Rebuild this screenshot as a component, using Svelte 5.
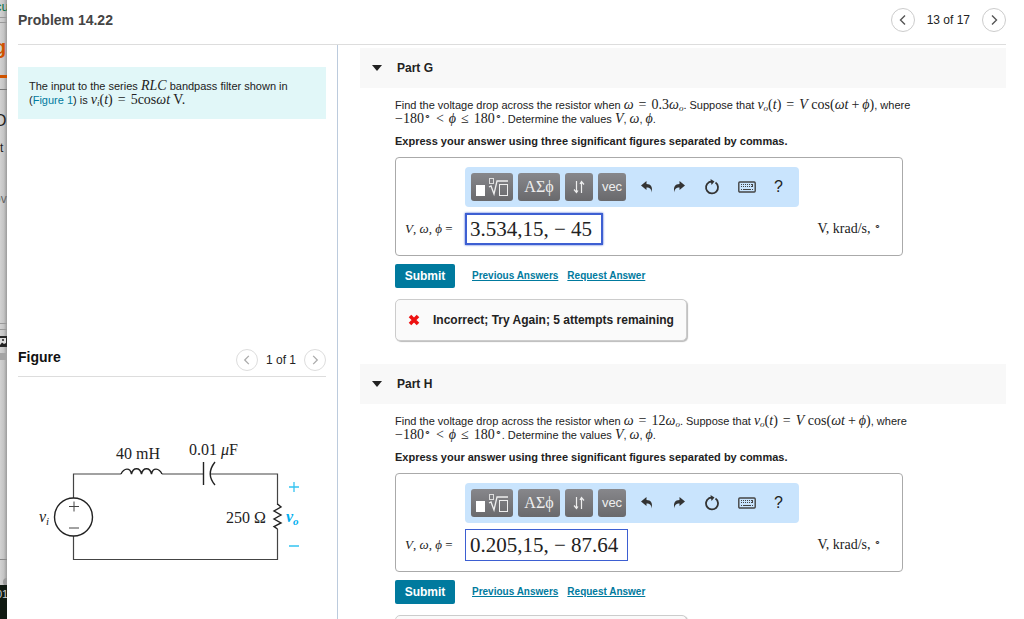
<script>
  const parts = $state([
    { id: 'G', factor: '0.3', answer: '3.534,15, − 45', width: 138, active: true },
    { id: 'H', factor: '12', answer: '0.205,15, − 87.64', width: 163, active: false }
  ]);
</script>

{#snippet arrow(dir)}
  <svg viewBox="0 0 22 22" aria-hidden="true">
    <path d={dir === 'left' ? 'M13 6.500 L8.500 11 L13 15.500' : 'M9 6.500 L13.500 11 L9 15.500'} fill="none" stroke="currentColor" stroke-width="1.400" />
  </svg>
{/snippet}

<div class="shell">
  <aside class="backdrop" aria-hidden="true">
    <svg width="7" height="1000" viewBox="0 0 7 1000">
      <defs>
        <linearGradient id="shade"><stop offset="0" stop-color="#d2d2d2" /><stop offset="0.55" stop-color="#c4c4c4" /><stop offset="1" stop-color="#9b9b9b" /></linearGradient>
      </defs>
      <rect width="7" height="585" fill="url(#shade)" />
      <text x="-5" y="11" class="g1">cu</text>
      <path d="M0 17.500H7M0 22.500H7" stroke="#999" />
      <text x="-6" y="54" class="g2">g</text>
      <rect y="75" width="7" height="3" fill="#cf5300" />
      <path d="M0 89.500H7" stroke="#777" />
      <text x="-6" y="126" class="g3">O</text>
      <text x="0" y="152" class="g4">t</text>
      <text x="-6" y="203" class="g5">ov</text>
      <path d="M0 323.500H7M0 329.500H7" stroke="#999" />
      <rect y="336" width="7" height="11" fill="#292929" />
      <rect y="338" width="6" height="8" fill="#ddd" />
      <path d="M0 345L2 342.500L4 344L6 343V346H0Z" fill="#222" />
      <circle cx="3" cy="340" r="1" fill="#222" />
      <rect y="353" width="7" height="7" fill="#a4a4a4" />
      <path d="M0 559.500H7" stroke="#888" />
      <circle cx="7" cy="582" r="4" fill="#999" />
      <rect y="585" width="7" height="415" fill="#101a12" />
      <text x="-4" y="598" class="g6">01</text>
    </svg>
  </aside>

  <div class="page">
    <header class="top">
      <h1>Problem 14.22</h1>
      <nav class="pager" aria-label="Problems">
        <button aria-label="Previous problem">{@render arrow('left')}</button>
        <span>13 of 17</span>
        <button aria-label="Next problem">{@render arrow('right')}</button>
      </nav>
    </header>

    <div class="columns">
      <section class="left">
        <div class="intro">
          The input to the series <i class="m">RLC</i> bandpass filter shown in<br />
          (<a href="#figure">Figure 1</a>) is <span class="m"><i>v<sub>i</sub></i>(<i>t</i>)<span class="rel">=</span>5cos<i>ωt</i> V.</span>
        </div>
        <div class="figure" id="figure">
          <div class="figure-head">
            <h2>Figure</h2>
            <nav class="pager small" aria-label="Figures">
              <button aria-label="Previous figure" disabled>{@render arrow('left')}</button>
              <span>1 of 1</span>
              <button aria-label="Next figure" disabled>{@render arrow('right')}</button>
            </nav>
          </div>
          <svg class="circuit" viewBox="18 377 308 200" role="img" aria-label="Series RLC bandpass filter">
            <g fill="none" stroke="#444" stroke-width="1.200">
              <path d="M73.500 498V474H121" />
              <path d="M162 474H203M210 474H277.500V505" />
              <path d="M277.500 529V559.500H73.500V536" />
              <path d="M69 506.500H79M74 501.500V511.500M69 528H79" stroke-width="1" />
            </g>
            <g fill="none" stroke="#222" stroke-width="1.400">
              <circle cx="73.500" cy="517" r="19" />
              <path d="M121 474C124 468 130 467 131.500 474C133 467 140 467 141.500 474C143 467 150 467 151.500 474C153 467 159 468 162 474" />
              <path d="M203.500 462V485M215 462Q205.500 474 215 485" />
              <path d="M277.500 504L281 507L274 511L281 515L274 519L281 523L274 526.500L277.500 529" />
            </g>
            <g class="label">
              <text x="116" y="459">40 mH</text>
              <text x="189" y="455">0.01 <tspan font-style="italic">μ</tspan>F</text>
              <text x="226" y="523">250 Ω</text>
              <text x="39" y="522" font-style="italic">v<tspan dy="3" font-size="11">i</tspan></text>
              <text x="286" y="522" class="cyan">v<tspan dy="3" font-size="11">o</tspan></text>
            </g>
            <path d="M289 487H299M294 482V492M289 546H299" stroke="#35c3f1" stroke-width="1.300" />
          </svg>
        </div>
      </section>

      <main>
        {#each parts as part (part.id)}
          <section class="part">
            <h2 class="part-head"><svg width="10" height="6" viewBox="0 0 10 6" aria-hidden="true"><path d="M0 0H10L5 6Z" fill="#222" /></svg>Part {part.id}</h2>
            <div class="body">
              <p>
                Find the voltage drop across the resistor when <span class="m"><i>ω</i><span class="rel">=</span>{part.factor}<i>ω<sub>o</sub></i></span>. Suppose that <span class="m"><i>v<sub>o</sub></i>(<i>t</i>)<span class="rel">=</span><i>V</i> cos(<i>ωt</i><span class="op">+</span><i>ϕ</i>)</span>, where<br />
                <span class="m">−180<sup>∘</sup><span class="rel">&lt;</span><i>ϕ</i><span class="rel">≤</span>180<sup>∘</sup></span>. Determine the values <i class="m">V</i>, <i class="m">ω</i>, <i class="m">ϕ</i>.
              </p>
              <p class="strong">Express your answer using three significant figures separated by commas.</p>

              <div class="answer">
                <label for="answer-{part.id}"><i>V</i>, <i>ω</i>, <i>ϕ</i> =</label>
                <div class="entry">
                  <div class="toolbar">
                    <button class="key wide" aria-label="Templates">
                      <svg width="34" height="20" viewBox="0 0 34 20" aria-hidden="true">
                        <rect x="1" y="8" width="9" height="11" fill="#fff" />
                        <path d="M14 10L16 9L19 17L22 4H33" fill="none" stroke="#eee" stroke-width="1.300" />
                        <rect x="14.500" y="1.500" width="4" height="5" fill="none" stroke="#ddd" />
                        <rect x="24.500" y="7.500" width="8" height="11" fill="none" stroke="#eee" />
                      </svg>
                    </button>
                    <button class="key wide greek">ΑΣϕ</button>
                    <button class="key" aria-label="Subscript and superscript">
                      <svg width="12" height="14" viewBox="0 0 12 14" aria-hidden="true"><path d="M3.500 1V12M1 9.500L3.500 12.500L5 10.500M8.500 13V2M7 4L8.500 1.500L11 4.500" fill="none" stroke="#eee" stroke-width="1.200" /></svg>
                    </button>
                    <button class="key">vec</button>
                    <div class="tools">
                      <button aria-label="Undo"><svg width="14" height="14" viewBox="0 0 14 14" aria-hidden="true"><path d="M1 5.500L6.500 1V4C11 4 13 7 11.500 12.500C11.500 9 10 7.500 6.500 7.500V10Z" fill="#333" /></svg></button>
                      <button aria-label="Redo"><svg width="14" height="14" viewBox="0 0 14 14" aria-hidden="true"><path d="M13 5.500L7.500 1V4C3 4 1 7 2.500 12.500C2.500 9 4 7.500 7.500 7.500V10Z" fill="#333" /></svg></button>
                      <button aria-label="Reset"><svg width="16" height="16" viewBox="0 0 16 16" aria-hidden="true"><path d="M11.500 3.500A6 6 0 1 1 5 3.200L8 2.500" fill="none" stroke="#333" stroke-width="1.800" /><path d="M6.500 0L10.500 2.500L7.500 6Z" fill="#333" /></svg></button>
                      <button aria-label="Keyboard"><svg width="18" height="12" viewBox="0 0 18 12" aria-hidden="true"><rect x="0.800" y="1" width="16.400" height="10" rx="1" fill="none" stroke="#444" stroke-width="1.400" /><path d="M3 3.500H15M3 5.500H15" stroke="#444" stroke-dasharray="1 1" /><path d="M3 8.500H4M5 8.500H13M14 8.500H15M14.500 3V6" stroke="#444" /></svg></button>
                      <button class="help" aria-label="Help">?</button>
                    </div>
                  </div>
                  <div class="row">
                    <input id="answer-{part.id}" class:active={part.active} style="width: {part.width}px" bind:value={part.answer} />
                    <span class="units">V, krad/s, <sup>∘</sup></span>
                  </div>
                </div>
              </div>

              <div class="actions">
                <button class="submit">Submit</button>
                <a href="#previous">Previous Answers</a>
                <a href="#request">Request Answer</a>
              </div>
              <div class="feedback" role="status">
                <svg width="12" height="12" viewBox="0 0 12 12" aria-hidden="true"><path d="M2 2L10 10M10 2L2 10" stroke="#ed1111" stroke-width="3.600" /></svg>
                Incorrect; Try Again; 5 attempts remaining
              </div>
            </div>
          </section>
        {/each}
      </main>
    </div>
  </div>
</div>

<style>
  :global(body) { margin: 0; background: #fff; }
  .shell { display: flex; height: 100vh; overflow: hidden; font: 11px/14px "Liberation Sans", Arial, sans-serif; color: #222; }
  .backdrop { width: 7px; flex: none; overflow: hidden; }
  .backdrop svg { display: block; }
  .g1 { font-size: 13px; fill: #0b7045; }
  .g2 { font-size: 20px; font-weight: 700; fill: #cf5300; }
  .g3 { font-size: 16px; fill: #222; }
  .g4 { font-size: 12px; fill: #222; }
  .g5 { font-size: 12px; fill: #666; }
  .g6 { font-size: 11px; fill: #ccc; }
  .page { flex: 1; min-width: 0; display: flex; flex-direction: column; padding: 0 18px 0 11px; }
  button { font-family: inherit; margin: 0; padding: 0; border: 0; background: none; color: inherit; cursor: pointer; }
  h1, h2, p { margin: 0; }
  .top { display: flex; align-items: center; justify-content: space-between; height: 40px; padding-bottom: 4px; border-bottom: 1px solid #ddd; flex: none; }
  h1 { font-size: 14px; line-height: 16px; color: #444; }
  .pager { display: flex; align-items: center; gap: 12px; font-size: 12px; }
  .pager button { width: 24px; height: 24px; box-sizing: border-box; border: 1px solid #ccc; border-radius: 50%; color: #555; }
  .pager svg { display: block; width: 100%; }
  .pager.small { gap: 8px; }
  .pager.small button { width: 22px; height: 22px; border-color: #ddd; color: #aaa; }
  .columns { flex: 1; min-height: 0; display: flex; }
  .left { flex: none; width: 308px; padding: 22px 11px 0 0; border-right: 1px solid #bccbdd; }
  .intro { height: 29px; padding: 12px 11px 11px; background: #e1f7f8; }
  a { color: #007a9e; text-decoration: none; }
  .m { font-family: "Liberation Serif", serif; font-size: 14px; line-height: 1px; }
  sub { font-size: 9px; line-height: 1px; vertical-align: -2px; }
  sup { font-size: 11px; line-height: 1px; vertical-align: 3px; }
  .rel { margin: 0 5px; }
  .op { margin: 0 3px; }
  .figure { margin-top: 225px; }
  .figure-head { display: flex; justify-content: space-between; align-items: center; height: 32px; border-bottom: 1px solid #ddd; }
  .figure-head h2 { font-size: 14px; line-height: 16px; color: #111; padding-bottom: 7px; }
  .circuit { display: block; width: 100%; }
  .label { font: 16px "Liberation Serif", serif; fill: #222; }
  .cyan { fill: #00aeef; font-style: italic; font-weight: 700; }
  main { flex: 1; min-width: 0; padding: 3px 0 0 22px; }
  .part { margin-bottom: 23px; }
  .part-head { display: flex; align-items: center; gap: 15px; height: 40px; padding-left: 12px; background: #f8f8f8; font-size: 12px; }
  .body { padding: 10px 0 0 35px; }
  p { margin-bottom: 8px; white-space: nowrap; }
  .strong { font-weight: 700; margin-bottom: 9px; }
  .answer { display: flex; box-sizing: border-box; width: 508px; max-width: 100%; height: 99px; padding: 9px 9px 0; border: 1px solid #aaa; border-radius: 4px; }
  .answer label { width: 60px; flex: none; padding-top: 54px; font: 13px/16px "Liberation Serif", serif; }
  .entry { flex: 1; }
  .toolbar { display: flex; align-items: center; gap: 5px; box-sizing: border-box; width: 334px; height: 40px; padding: 0 6px; border-radius: 4px; background: #c9e4fd; }
  .key { display: grid; place-items: center; width: 28px; height: 28px; border-radius: 3px; background: linear-gradient(#87878b, #69696c); color: #eee; font-size: 13px; line-height: 16px; }
  .key.wide { width: 42px; }
  .greek { font: 16px/18px "Liberation Serif", serif; }
  .tools { flex: 1; display: flex; justify-content: space-between; align-items: center; padding: 0 10px 0 9px; }
  .tools svg { display: block; }
  .help { font-size: 16px; line-height: 18px; }
  .row { display: flex; align-items: center; justify-content: space-between; padding: 6px 12px 0 0; }
  input { box-sizing: border-box; height: 32px; margin: 0; padding: 0 4px; border: 1px solid #3d5fd2; font: 21px/26px "Liberation Serif", serif; color: #222; outline: none; }
  input.active { border-width: 2px; padding: 0 3px; box-shadow: 0 0 2px #3d5fd2; }
  .units { font: 14px/16px "Liberation Serif", serif; }
  .actions { display: flex; align-items: center; gap: 9px; padding-top: 8px; }
  .actions a { font-size: 10px; font-weight: 700; text-decoration: underline; }
  .submit { width: 60px; height: 24px; margin-right: 8px; border-radius: 2px; background: #007a9e; color: #fff; font-size: 12px; font-weight: 700; }
  .feedback { display: flex; align-items: center; gap: 13px; width: fit-content; height: 40px; margin-top: 11px; padding: 0 12px; border: 1px solid #ccc; border-radius: 5px; box-shadow: 1px 1px 1px #bbb; background: #fafafa; font-size: 12px; font-weight: 700; }
</style>
